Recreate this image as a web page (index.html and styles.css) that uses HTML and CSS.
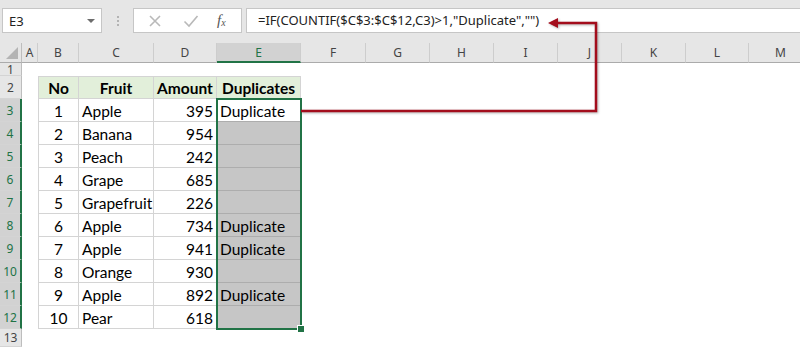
FILE: index.html
```html
<!DOCTYPE html>
<html lang="en">
<head>
  <meta charset="UTF-8" />
  <meta name="viewport" content="width=device-width, initial-scale=1" />
  <title>Duplicates - Sheet1</title>
  <link rel="stylesheet" href="styles.css">
</head>
<body>
  <div class="app">
    <!-- name box + formula bar -->
    <div class="toolbar">
      <div class="namebox">
        <span>E3</span>
        <span class="caret"></span>
      </div>
      <div class="grip"><i></i><i></i><i></i></div>
      <div class="fx-buttons">
        <svg class="btn" width="14" height="14" viewBox="0 0 14 14">
          <path d="M2 2 L12 12 M12 2 L2 12" />
        </svg>
        <svg class="btn" width="16" height="14" viewBox="0 0 16 14">
          <path d="M1.5 7.5 L6 12 L14.5 2" />
        </svg>
        <span class="fx">f<sub>x</sub></span>
      </div>
      <div class="formula">=IF(COUNTIF($C$3:$C$12,C3)&gt;1,"Duplicate","")</div>
    </div>

    <div class="sheet">
      <!-- column headers -->
      <div class="corner"></div>
      <div class="ch">A</div>
      <div class="ch">B</div>
      <div class="ch">C</div>
      <div class="ch">D</div>
      <div class="ch sel">E</div>
      <div class="ch">F</div>
      <div class="ch">G</div>
      <div class="ch">H</div>
      <div class="ch">I</div>
      <div class="ch">J</div>
      <div class="ch">K</div>
      <div class="ch">L</div>
      <div class="ch">M</div>

      <div class="rh">1</div><div class="rest-all"></div>

      <div class="rh">2</div><div></div>
      <div class="t hd first">No</div>
      <div class="t hd">Fruit</div>
      <div class="t hd">Amount</div>
      <div class="t hd">Duplicates</div>
      <div class="rest"></div>

      <div class="rh sel">3</div><div></div>
      <div class="t first num">1</div><div class="t">Apple</div><div class="t amt">395</div><div class="t dup active">Duplicate</div>
      <div class="rest"></div>

      <div class="rh sel">4</div><div></div>
      <div class="t first num">2</div><div class="t">Banana</div><div class="t amt">954</div><div class="t dup"></div>
      <div class="rest"></div>

      <div class="rh sel">5</div><div></div>
      <div class="t first num">3</div><div class="t">Peach</div><div class="t amt">242</div><div class="t dup"></div>
      <div class="rest"></div>

      <div class="rh sel">6</div><div></div>
      <div class="t first num">4</div><div class="t">Grape</div><div class="t amt">685</div><div class="t dup"></div>
      <div class="rest"></div>

      <div class="rh sel">7</div><div></div>
      <div class="t first num">5</div><div class="t">Grapefruit</div><div class="t amt">226</div><div class="t dup"></div>
      <div class="rest"></div>

      <div class="rh sel">8</div><div></div>
      <div class="t first num">6</div><div class="t">Apple</div><div class="t amt">734</div><div class="t dup">Duplicate</div>
      <div class="rest"></div>

      <div class="rh sel">9</div><div></div>
      <div class="t first num">7</div><div class="t">Apple</div><div class="t amt">941</div><div class="t dup">Duplicate</div>
      <div class="rest"></div>

      <div class="rh sel">10</div><div></div>
      <div class="t first num">8</div><div class="t">Orange</div><div class="t amt">930</div><div class="t dup"></div>
      <div class="rest"></div>

      <div class="rh sel">11</div><div></div>
      <div class="t first num">9</div><div class="t">Apple</div><div class="t amt">892</div><div class="t dup">Duplicate</div>
      <div class="rest"></div>

      <div class="rh sel">12</div><div></div>
      <div class="t first num">10</div><div class="t">Pear</div><div class="t amt">618</div><div class="t dup"></div>
      <div class="rest"></div>

      <div class="rh">13</div><div class="rest-all"></div>

      <!-- E3:E12 selection frame, sits over the grid area -->
      <div class="selection"><span class="handle"></span></div>
    </div>

    <!-- callout from E3 to the formula -->
    <svg class="callout" width="800" height="347" viewBox="0 0 800 347">
      <path d="M301 111 H596 V23 H556" fill="none" stroke="#a30d1c" stroke-width="2.5" />
      <polygon points="548,23 558,18 558,28" fill="#a30d1c" />
    </svg>
  </div>
</body>
</html>
```

FILE: styles.css
```css
body {
  margin: 0;
  background: #fff;
  font-family: "Noto Sans", sans-serif;
}
.app {
  position: relative;
  width: 800px;
  height: 347px;
  overflow: hidden;
  background: #fff;
}

/* ---------- formula bar ---------- */
.toolbar {
  height: 43px;
  box-sizing: border-box;
  padding: 8px 0 0 2px;
  display: flex;
  align-items: flex-start;
  background: #e6e6e6;
}
.namebox {
  width: 100px;
  height: 25px;
  box-sizing: border-box;
  border: 1px solid #c6c6c6;
  background: #fff;
  display: flex;
  align-items: center;
  justify-content: space-between;
  padding: 0 6px 0 6px;
  font-size: 13px;
  color: #222;
}
.caret {
  width: 0;
  height: 0;
  border-left: 4px solid transparent;
  border-right: 4px solid transparent;
  border-top: 4px solid #6d6d6d;
}
.grip {
  width: 31px;
  height: 25px;
  display: flex;
  flex-direction: column;
  align-items: center;
  justify-content: center;
  gap: 2px;
}
.grip i {
  width: 2px;
  height: 2px;
  background: #b3b3b3;
}
.fx-buttons {
  width: 109px;
  height: 25px;
  box-sizing: border-box;
  border: 1px solid #c6c6c6;
  background: #fff;
  display: flex;
  align-items: center;
  padding-left: 14px;
  gap: 21px;
}
.btn {
  fill: none;
  stroke: #b9b9b9;
  stroke-width: 1.6;
}
.fx {
  font-family: "Liberation Serif", serif;
  font-style: italic;
  font-size: 15px;
  color: #555;
  margin-left: -3px;
}
.fx sub {
  font-size: 10px;
  vertical-align: -1px;
}
.formula {
  margin-left: 4px;
  flex: 1;
  height: 25px;
  box-sizing: border-box;
  border: 1px solid #c6c6c6;
  border-right: none;
  background: #fff;
  padding-left: 11px;
  line-height: 23px;
  font-size: 13px;
  color: #222;
  white-space: nowrap;
}

/* ---------- grid ---------- */
.sheet {
  position: relative;
  display: grid;
  grid-template-columns: 22px 16px 41px 75px 63px 84px 65px 64px 64px 64px 64px 64px 63px 64px;
  grid-template-rows: 20px 13px repeat(11, 23px);
  font-family: Lato, "Liberation Sans", sans-serif;
  font-size: 15.5px;
  color: #000;
}
.corner {
  background: #e6e6e6;
  border-right: 1px solid #bdbdbd;
  border-bottom: 1px solid #ababab;
  box-sizing: border-box;
  position: relative;
}
.corner::after {
  content: "";
  position: absolute;
  right: 3px;
  bottom: 3px;
  border-left: 12px solid transparent;
  border-bottom: 12px solid #b4b4b4;
}
.ch {
  background: #e6e6e6;
  box-sizing: border-box;
  border-right: 1px solid #cdcdcd;
  border-bottom: 1px solid #ababab;
  font-family: "Noto Sans", sans-serif;
  font-size: 12px;
  color: #444;
  text-align: center;
  line-height: 20px;
}
.ch.sel {
  background: #d2d2d2;
  color: #217346;
  border-bottom: 2px solid #217346;
}
.rh {
  grid-column: 1;
  background: #e6e6e6;
  box-sizing: border-box;
  border-right: 1px solid #bdbdbd;
  border-bottom: 1px solid #d4d4d4;
  font-family: "Noto Sans", sans-serif;
  font-size: 12px;
  color: #444;
  display: flex;
  align-items: center;
  justify-content: center;
}
.rh.sel {
  background: #d2d2d2;
  color: #217346;
  border-right: 2px solid #217346;
}
.rest {
  grid-column: span 8;
}
.rest-all {
  grid-column: span 13;
}

/* data table B2:E12 */
.t {
  box-sizing: border-box;
  border-right: 1px solid #d4d4d4;
  border-bottom: 1px solid #d4d4d4;
  padding: 1px 3px 0;
  line-height: 22px;
  white-space: nowrap;
  overflow: hidden;
}
.t.first {
  border-left: 1px solid #d4d4d4;
}
.t.hd {
  background: #e2efda;
  border-top: 1px solid #d4d4d4;
  font-weight: bold;
  text-align: center;
  line-height: 21px;
}
.t.num {
  text-align: center;
}
.t.amt {
  text-align: right;
}
.t.dup {
  background: #c6c6c6;
  border-bottom-color: #adadad;
  border-right: none;
}
.t.dup.active {
  background: #fff;
}

.selection {
  position: absolute;
  grid-column: 6 / 7;
  grid-row: 4 / 14;
  top: -1px;
  left: -1px;
  right: -1px;
  bottom: -1px;
  border: 2px solid #217346;
  pointer-events: none;
}
.handle {
  position: absolute;
  right: -5px;
  bottom: -5px;
  width: 6px;
  height: 6px;
  background: #217346;
  border: 1px solid #fff;
}

.callout {
  position: absolute;
  left: 0;
  top: 0;
  pointer-events: none;
  filter: drop-shadow(1px 1px 1px rgba(0, 0, 0, 0.3));
}
```
